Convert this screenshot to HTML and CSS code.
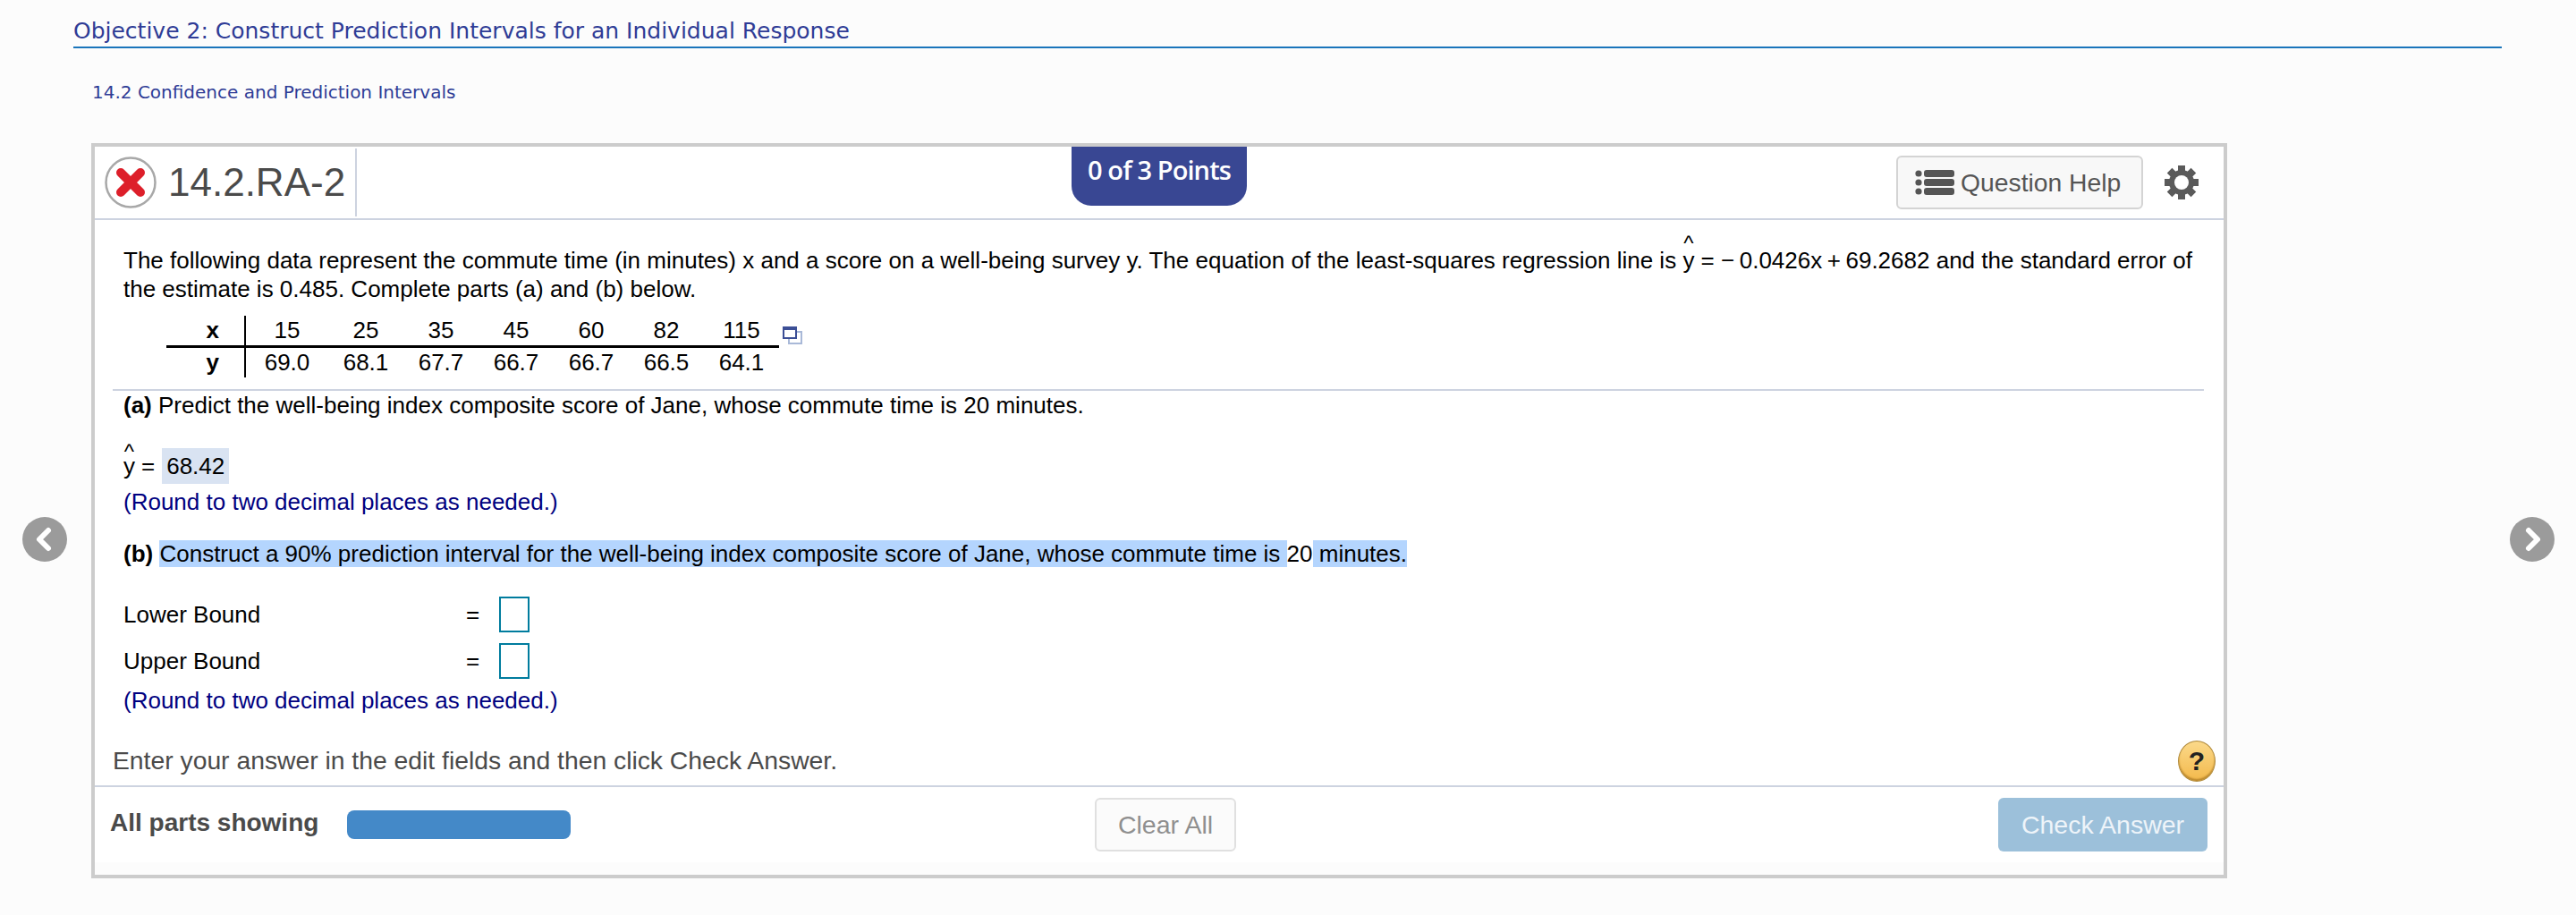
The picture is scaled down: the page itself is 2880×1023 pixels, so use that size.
FILE: index.html
```html
<!DOCTYPE html>
<html lang="en">
<head>
  <meta charset="UTF-8">
  <title>14.2 Confidence and Prediction Intervals</title>
  <link rel="stylesheet" href="styles.css">
</head>
<body>
  <h1 class="objective">Objective 2: Construct Prediction Intervals for an Individual Response</h1>
  <h2 class="section">14.2 Confidence and Prediction Intervals</h2>

  <div class="card">
    <div class="card-head">
      <div class="question-id">
        <svg class="x-icon" width="58" height="58" viewBox="0 0 58 58">
          <circle cx="29" cy="29" r="27.5" fill="#fff" stroke="#a8a8a8" stroke-width="2.5"/>
          <path d="M18 18 L40 40 M40 18 L18 40" stroke="#dd1f2a" stroke-width="10" stroke-linecap="round"/>
        </svg>
        <span class="question-num">14.2.RA-2</span>
      </div>
      <div class="points">0 of 3 Points</div>
      <div class="head-tools">
        <button class="help-btn">
          <svg width="44" height="28" viewBox="0 0 44 28">
            <g fill="#555">
              <circle cx="4" cy="4" r="3.6"/><circle cx="4" cy="14" r="3.6"/><circle cx="4" cy="24" r="3.6"/>
              <rect x="10" y="0" width="34" height="8" rx="3"/>
              <rect x="10" y="10" width="34" height="8" rx="3"/>
              <rect x="10" y="20" width="34" height="8" rx="3"/>
            </g>
          </svg>
          Question Help
        </button>
        <svg class="gear" width="40" height="40" viewBox="0 0 40 40">
          <g stroke="#5a5a5a" stroke-width="8">
            <path d="M20 1 V39 M1 20 H39 M6.6 6.6 L33.4 33.4 M33.4 6.6 L6.6 33.4"/>
          </g>
          <circle cx="20" cy="20" r="14" fill="#5a5a5a"/>
          <circle cx="20" cy="20" r="8" fill="#fff"/>
        </svg>
      </div>
    </div>

    <div class="card-body">
      <p class="intro">The following data represent the commute time (in minutes) x and a score on a well-being survey y. The equation of the least-squares regression line is <span class="hat">y</span> = <span class="eq">&minus; 0.0426x + 69.2682</span> and the standard error of the estimate is 0.485. Complete parts (a) and (b) below.</p>

      <div class="data-wrap">
        <table class="data">
          <tr><th>x</th><td>15</td><td>25</td><td>35</td><td>45</td><td>60</td><td>82</td><td>115</td></tr>
          <tr><th>y</th><td>69.0</td><td>68.1</td><td>67.7</td><td>66.7</td><td>66.7</td><td>66.5</td><td>64.1</td></tr>
        </table>
        <svg class="copy-icon" width="24" height="22" viewBox="0 0 24 22">
          <rect x="8" y="7" width="14" height="13" fill="#fff" stroke="#a9b9d8" stroke-width="2"/>
          <rect x="2" y="2" width="14" height="12" fill="#fff" stroke="#3c4f96" stroke-width="2"/>
          <rect x="2" y="2" width="14" height="3" fill="#3c4f96"/>
        </svg>
      </div>

      <div class="part-a">
        <p class="line"><b>(a)</b> Predict the well-being index composite score of Jane, whose commute time is 20 minutes.</p>
        <p class="answer"><span class="hat">y</span> = <span class="filled">68.42</span></p>
        <p class="note">(Round to two decimal places as needed.)</p>
      </div>

      <p class="line part-b"><b>(b)</b> <mark>Construct a 90% prediction interval for the well-being index composite score of Jane, whose commute time is </mark>20<mark> minutes.</mark></p>

      <div class="bound first">
        <span class="bound-label">Lower Bound</span><span class="bound-eq">=</span><span class="input-box"></span>
      </div>
      <div class="bound">
        <span class="bound-label">Upper Bound</span><span class="bound-eq">=</span><span class="input-box"></span>
      </div>
      <p class="note note-b">(Round to two decimal places as needed.)</p>
    </div>

    <div class="prompt">
      <span>Enter your answer in the edit fields and then click Check Answer.</span>
      <span class="hint">?</span>
    </div>

    <div class="card-foot">
      <span class="parts-label">All parts showing</span>
      <span class="progress"></span>
      <button class="clear-btn">Clear All</button>
      <button class="check-btn">Check Answer</button>
    </div>
    <div class="foot-strip"></div>
  </div>

  <div class="nav nav-left">
    <svg width="50" height="50" viewBox="0 0 50 50"><circle cx="25" cy="25" r="25" fill="#9b9b9b"/><path d="M29 15 L19 25 L29 35" fill="none" stroke="#fff" stroke-width="6" stroke-linecap="round" stroke-linejoin="round"/></svg>
  </div>
  <div class="nav nav-right">
    <svg width="50" height="50" viewBox="0 0 50 50"><circle cx="25" cy="25" r="25" fill="#9b9b9b"/><path d="M21 15 L31 25 L21 35" fill="none" stroke="#fff" stroke-width="6" stroke-linecap="round" stroke-linejoin="round"/></svg>
  </div>
</body>
</html>
```

FILE: styles.css
```css
body {
  margin: 0;
  background-color: #fcfcfc;
  font-family: "Liberation Sans", Arial, sans-serif;
  color: #000;
  position: relative;
  height: 1023px;
  overflow: hidden;
}
p {
  margin: 0;
}
.objective {
  margin: 0 83px 0 82px;
  height: 54px;
  box-sizing: border-box;
  padding-top: 20px;
  border-bottom: 2px solid #1a75bb;
  font-family: "DejaVu Sans", Verdana, sans-serif;
  font-size: 25px;
  line-height: 30px;
  font-weight: normal;
  color: #2f3c96;
}
.section {
  margin: 35px 0 0 103px;
  height: 71px;
  font-family: "DejaVu Sans", Verdana, sans-serif;
  font-size: 20px;
  line-height: 28px;
  font-weight: normal;
  color: #2f3c96;
}
.card {
  margin-left: 102px;
  width: 2388px;
  height: 822px;
  box-sizing: border-box;
  border: 4px solid #ccc;
  background: #fff;
  display: flex;
  flex-direction: column;
  position: relative;
}
.card-head {
  height: 82px;
  flex: none;
  box-sizing: border-box;
  border-bottom: 2px solid #cdd3e0;
  display: flex;
  align-items: flex-start;
  position: relative;
}
.question-id {
  margin-top: 2px;
  width: 293px;
  height: 76px;
  box-sizing: border-box;
  border-right: 2px solid #cdd3e0;
  display: flex;
  align-items: center;
  gap: 13px;
  padding-left: 11px;
}
.question-num {
  font-size: 44px;
  color: #4a4a4a;
}
.points {
  position: absolute;
  left: 1092px;
  top: 0;
  width: 196px;
  height: 66px;
  box-sizing: border-box;
  padding-top: 5px;
  background: #394793;
  border-radius: 0 0 22px 22px;
  text-align: center;
  font-family: "Open Sans", sans-serif;
  font-size: 29px;
  font-weight: 600;
  letter-spacing: -0.9px;
  line-height: 42px;
  color: #fff;
}
.head-tools {
  margin-left: auto;
  margin-top: 10px;
  margin-right: 27px;
  display: flex;
  align-items: center;
  gap: 23px;
}
.help-btn {
  width: 276px;
  height: 60px;
  box-sizing: border-box;
  padding: 0 0 0 19px;
  border: 2px solid #d4d4d4;
  border-radius: 6px;
  background: #f8f8f8;
  display: flex;
  align-items: center;
  gap: 7px;
  font-family: "Liberation Sans", Arial, sans-serif;
  font-size: 28.3px;
  color: #555;
}
.card-body {
  flex: 1;
  padding: 0 22px 0 20px;
}
.intro {
  margin: 29px 0 0 12px;
  font-size: 26px;
  line-height: 32px;
}
.hat {
  position: relative;
  display: inline-block;
}
.hat::before {
  content: "^";
  position: absolute;
  left: 0;
  right: 0;
  top: -19px;
  text-align: center;
  font-size: 24px;
}
.eq {
  word-spacing: -1.7px;
}
.data-wrap {
  margin: 14px 0 0 0;
  padding-left: 60px;
  height: 82px;
  display: flex;
  align-items: flex-start;
  border-bottom: 2px solid #cdd3e0;
}
.data {
  border-collapse: collapse;
  font-size: 26px;
}
.data th, .data td {
  height: 33px;
  padding: 0;
  text-align: center;
  font-weight: normal;
}
.data th {
  width: 88px;
  padding-right: 28px;
  box-sizing: border-box;
  text-align: right;
  font-weight: bold;
  border-right: 2px solid #000;
}
.data td {
  width: 84px;
}
.data td:nth-child(2) {
  width: 92px;
}
.data tr:first-child th, .data tr:first-child td {
  border-bottom: 3px solid #000;
}
.copy-icon {
  margin: 11px 0 0 3px;
}
.part-a {
  padding-left: 12px;
}
.line {
  font-size: 26px;
  line-height: 32px;
}
.answer {
  margin-top: 32px;
  height: 40px;
  font-size: 26px;
  line-height: 40px;
  display: flex;
  gap: 7px;
}
.answer .hat::before {
  top: -16px;
}
.filled {
  background: #d9e3f2;
  padding: 0 5px;
  margin-left: 1px;
}
.note {
  margin-top: 2px;
  font-size: 26px;
  line-height: 36px;
  color: #000080;
}
.part-b {
  margin: 24px 0 0 12px;
}
.part-b mark {
  background: #b4d5fe;
}
.bound {
  margin: 12px 0 0 12px;
  display: flex;
  align-items: center;
  height: 40px;
  font-size: 26px;
}
.bound.first {
  margin-top: 32px;
}
.bound-label {
  width: 383px;
}
.bound-eq {
  width: 37px;
}
.input-box {
  width: 34px;
  height: 40px;
  box-sizing: border-box;
  border: 2px solid #007c9e;
}
.note-b {
  margin: 6px 0 0 12px;
}
.prompt {
  height: 56px;
  flex: none;
  box-sizing: border-box;
  padding: 0 9px 1px 20px;
  border-bottom: 2px solid #cdd3e0;
  display: flex;
  align-items: center;
  justify-content: space-between;
  font-size: 28.3px;
  color: #4a4a4a;
}
.hint {
  width: 42px;
  height: 46px;
  box-sizing: border-box;
  border: 1px solid #b08a3c;
  border-radius: 50%;
  background: linear-gradient(#fbd98a, #f3b94c);
  box-shadow: inset 0 -2px 2px #b9862c;
  text-align: center;
  font-size: 30px;
  line-height: 44px;
  font-weight: bold;
  color: #222;
}
.card-foot {
  height: 84px;
  flex: none;
  box-sizing: border-box;
  display: flex;
  align-items: flex-start;
  padding: 12px 18px 0 17px;
}
.parts-label {
  margin-top: 12px;
  width: 265px;
  font-size: 28px;
  font-weight: bold;
  color: #4a4a4a;
}
.progress {
  margin-top: 14px;
  width: 250px;
  height: 32px;
  background: #4489c8;
  border-radius: 8px;
}
.clear-btn, .check-btn {
  height: 60px;
  box-sizing: border-box;
  font-family: "Liberation Sans", Arial, sans-serif;
  font-size: 28.5px;
  border-radius: 6px;
  padding: 0;
}
.clear-btn {
  margin-left: 586px;
  width: 158px;
  border: 2px solid #e0e0e0;
  background: #fbfbfb;
  color: #8f8f8f;
}
.check-btn {
  margin-left: auto;
  width: 234px;
  border: none;
  background: #9cc0da;
  color: #eef4f9;
}
.foot-strip {
  height: 14px;
  flex: none;
  background: #fcfcfc;
}
.nav {
  position: absolute;
  top: 578px;
  width: 50px;
  height: 50px;
}
.nav-left {
  left: 25px;
}
.nav-right {
  left: 2806px;
}
```
